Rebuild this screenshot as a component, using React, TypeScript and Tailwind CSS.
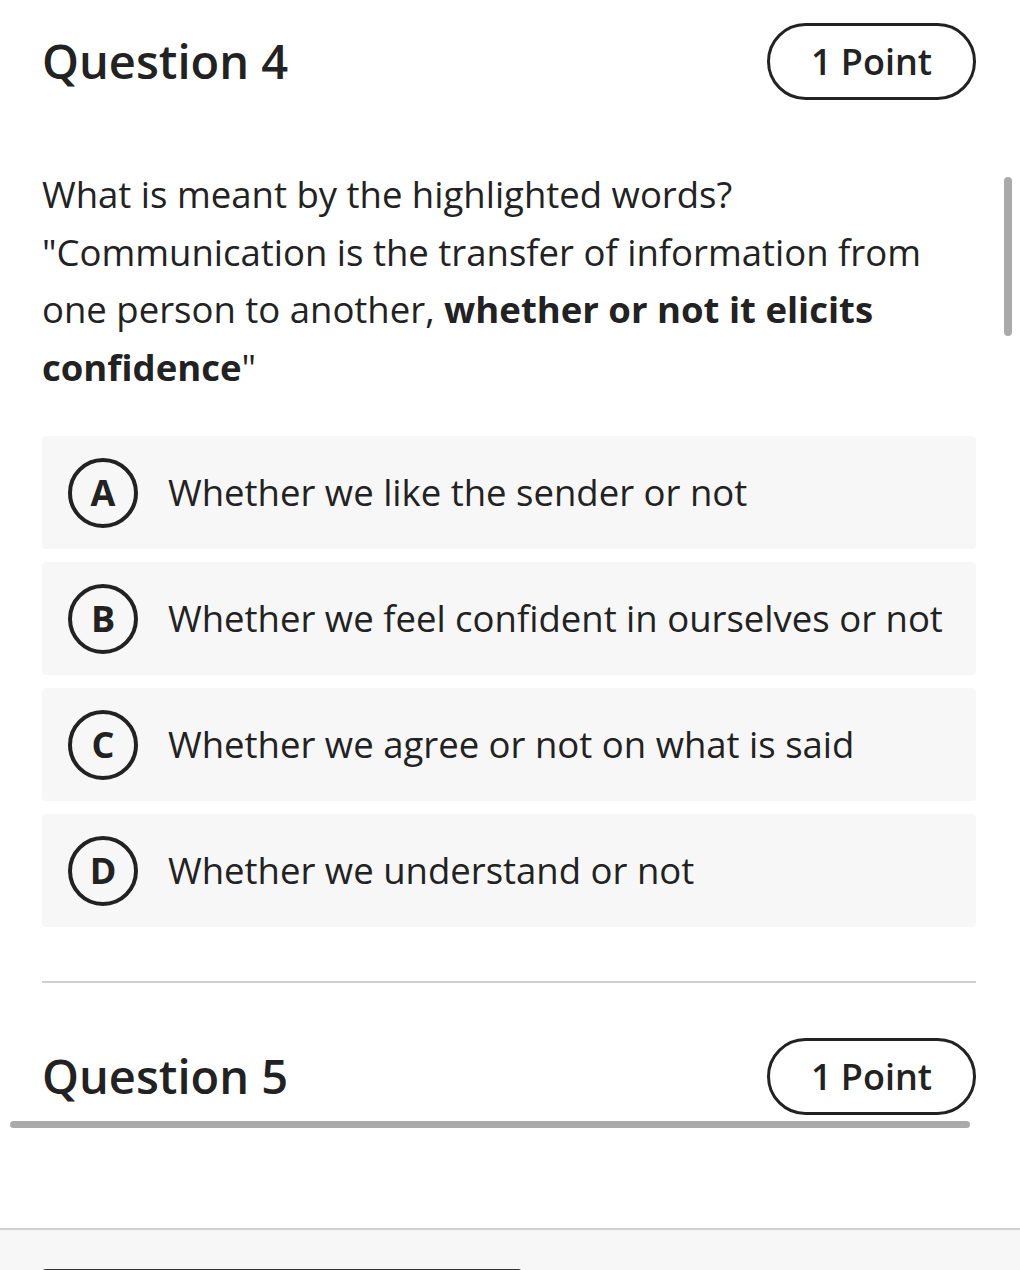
const options = [
  { letter: "A", text: "Whether we like the sender or not" },
  { letter: "B", text: "Whether we feel confident in ourselves or not" },
  { letter: "C", text: "Whether we agree or not on what is said" },
  { letter: "D", text: "Whether we understand or not" },
];

function PointBadge() {
  return (
    <div className="flex h-[77px] w-[209px] items-center justify-center rounded-full border-[3px] border-[#222] text-[36px] font-semibold text-[#222]">
      1 Point
    </div>
  );
}

export default function App() {
  return (
    <div
      className="relative flex h-[1270px] w-full flex-col overflow-hidden bg-white text-[#222]"
      style={{ fontFamily: '"Open Sans", "Noto Sans", sans-serif' }}
    >
      {/* vertical scrollbar */}
      <div className="absolute left-[1004px] top-[177px] h-[159px] w-[8px] rounded-full bg-[#aaa]" />

      <div className="pl-[42px] pr-[44px] pt-[23px]">
        <div className="flex items-center justify-between">
          <h2 className="text-[47px] font-semibold leading-none">Question 4</h2>
          <PointBadge />
        </div>

        <p className="mt-[66px] text-[36.5px] leading-[57.5px]">
          What is meant by the highlighted words?
          <br />
          "Communication is the transfer of information from one person to
          another, <b className="font-bold">whether or not it elicits confidence</b>"
        </p>

        <div className="mt-[40px] flex flex-col gap-[13px]">
          {options.map((o) => (
            <div
              key={o.letter}
              className="flex h-[113px] items-center rounded-[4px] bg-[#f7f7f7] pl-[26px]"
            >
              <div className="flex h-[70px] w-[70px] shrink-0 items-center justify-center rounded-full border-[4px] border-[#222] text-[36px] font-bold">
                {o.letter}
              </div>
              <span className="ml-[30px] text-[36.5px]">{o.text}</span>
            </div>
          ))}
        </div>

        <div className="mt-[54px] h-[2px] bg-[#d0d0d0]" />

        <div className="mt-[55px] flex items-center justify-between">
          <h2 className="text-[47px] font-semibold leading-none">Question 5</h2>
          <PointBadge />
        </div>
      </div>

      <div className="ml-[10px] mt-[6px] h-[7px] w-[960px] shrink-0 rounded-full bg-[#aaa]" />

      <div className="mt-[100px] h-[2px] shrink-0 bg-[#d0d0d0]" />
      <div className="flex-1 bg-[#f7f7f7] px-[42px] pt-[39px]">
        <div className="h-[10px] w-[480px] rounded-t-[4px] bg-[#333]" />
      </div>
    </div>
  );
}
